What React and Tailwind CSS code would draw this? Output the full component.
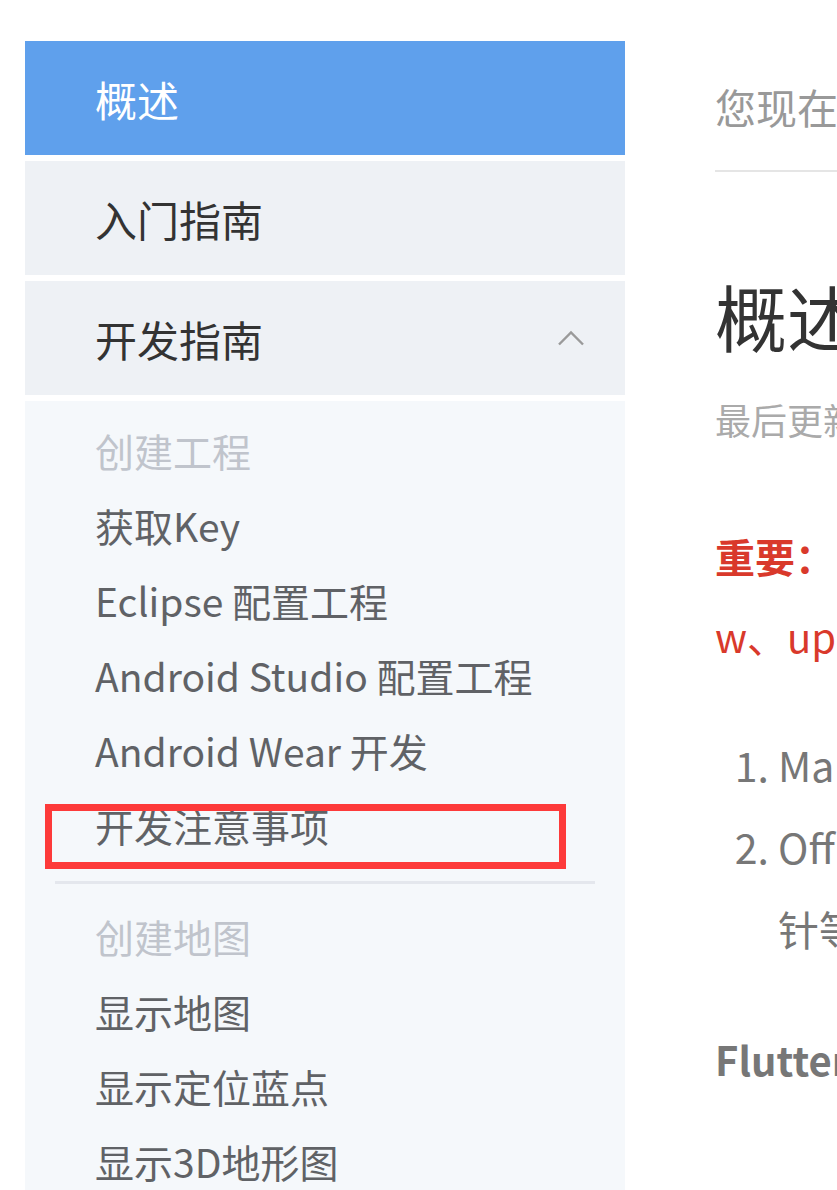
import React from "react";

const topMenu = [
  { label: "概述", active: true },
  { label: "入门指南" },
  { label: "开发指南", open: true },
];

const groups = [
  {
    title: "创建工程",
    items: ["获取Key", "Eclipse 配置工程", "Android Studio 配置工程", "Android Wear 开发", "开发注意事项"],
  },
  {
    title: "创建地图",
    items: ["显示地图", "显示定位蓝点", "显示3D地形图"],
  },
];

function ChevronUp() {
  return (
    <svg width="28" height="16" viewBox="0 0 28 16" fill="none">
      <path d="M2 14.5 L14 2.5 L26 14.5" stroke="#9a9a9a" strokeWidth="2.4" />
    </svg>
  );
}

function Sidebar() {
  return (
    <aside className="w-[600px] shrink-0 flex flex-col gap-[6px]">
      {topMenu.map((m) => (
        <div
          key={m.label}
          className={
            "h-[114px] shrink-0 flex items-center justify-between pl-[70px] pr-[40px] text-[42px] " +
            (m.active ? "bg-[#5fa0ec] text-white" : "bg-[#eef1f5] text-[#333333]")
          }
        >
          <span>{m.label}</span>
          {m.open && <ChevronUp />}
        </div>
      ))}

      {/* 子菜单 */}
      <div className="flex-1 bg-[#f5f8fb] pt-[12px]">
        {groups.map((g, gi) => (
          <div key={g.title}>
            {gi > 0 && <div className="mx-[30px] mt-[18px] mb-[15px] h-[3px] bg-[#e4e7ed]" />}
            <div className="h-[75px] flex items-center pl-[70px] text-[39px] text-[#c0c4cc]">{g.title}</div>
            {g.items.map((it) => (
              <div key={it} className="relative h-[75px] flex items-center pl-[70px] text-[39px] text-[#606266] whitespace-nowrap">
                {it}
                {it === "开发注意事项" && (
                  <div className="absolute left-[20px] top-[16px] w-[521px] h-[65px] border-[7px] border-[#fd3a3a]" />
                )}
              </div>
            ))}
          </div>
        ))}
      </div>
    </aside>
  );
}

function Content() {
  return (
    <main className="ml-[90px] flex-1 min-w-0 overflow-hidden whitespace-nowrap">
      <div className="pt-[35px] pb-[34px] border-b-[2px] border-[#e5e5e5] text-[41px] leading-[60px] text-[#999999]">
        您现在的位置：首页 &gt; 开发 &gt; Android 地图SDK &gt; 开发指南
      </div>
      <h1 className="mt-[100px] text-[72px] leading-[86px] text-[#333333] font-normal">概述</h1>
      <div className="mt-[36px] text-[36px] leading-[50px] text-[#aaaaaa]">最后更新时间: 2023年05月09日</div>

      <p className="mt-[72px] text-[40px] leading-[80px] text-[#d9392b]">
        <b>重要：</b>由于个人信息保护法的实施，从地图8.1.0版本起对旧版本SDK不兼容，请务必确保调用SDK任何接口前先调用更新隐私合规updatePrivacySho
        <br />
        w、updatePrivacyAgree两个接口并且参数值都为true，若未正确设置有崩溃风险；
      </p>

      <ol className="mt-[47px] list-decimal pl-[63px] text-[41px] leading-[82px] text-[#777777]">
        <li>MapsInitializer.updatePrivacyShow(context, true, true);</li>
        <li>
          OfflineMapManager、RouteSearch 等接口在使用前需设置隐私合规，
          <br />
          针等待相关接口调用成功后再进行后续操作。
        </li>
      </ol>

      <div className="mt-[50px] text-[40px] leading-[80px] font-bold text-[#777777]">Flutter 插件说明</div>
    </main>
  );
}

export default function App() {
  return (
    <div className="h-[1190px] overflow-hidden bg-white flex pt-[41px] pl-[25px] font-['Noto_Sans_CJK_SC','Noto_Sans',sans-serif]">
      <Sidebar />
      <Content />
    </div>
  );
}
